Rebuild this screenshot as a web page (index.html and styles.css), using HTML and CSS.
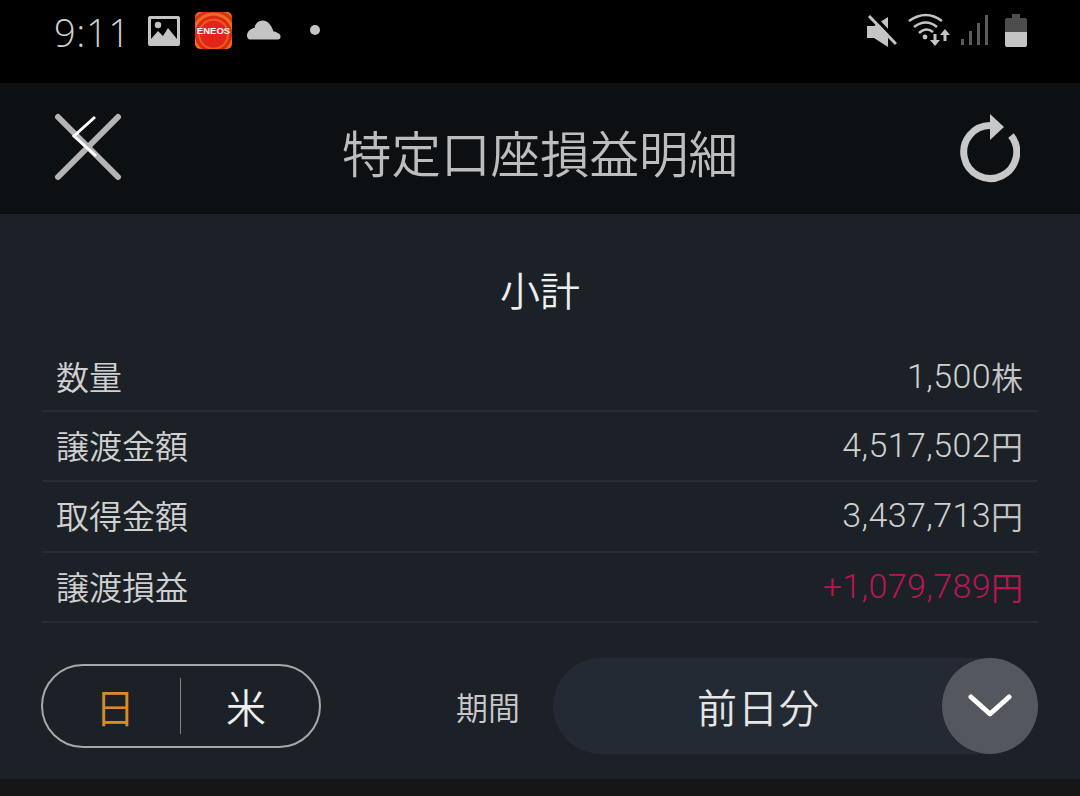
FILE: index.html
```html
<!DOCTYPE html>
<html lang="ja">
<head>
<meta charset="utf-8">
<title>特定口座損益明細</title>
<link rel="stylesheet" href="styles.css">
</head>
<body>
<div class="app">
  <div class="status">
    <span class="time">9:11</span>
    <svg class="ic-img" viewBox="0 0 32 30"><path fill-rule="evenodd" fill="#c4c4c4" d="M2 0h28a2 2 0 0 1 2 2v26a2 2 0 0 1-2 2H2a2 2 0 0 1-2-2V2a2 2 0 0 1 2-2zM3 3v20l7-8 5 5 5-8 9 11V3z"/><circle cx="10" cy="9" r="3.2" fill="#c4c4c4"/></svg>
    <div class="eneos"><span class="eneos-text">ENEOS</span></div>
    <svg class="ic-cloud" viewBox="0 0 34 20"><path fill="#c4c4c4" d="M3 19.500h28c3.500 0 3.500-5.500-.5-6.500-1-1-2.500-1.500-4-1.500C24 4 20 .5 16 .5c-4.500 0-8 3-8.500 7.500C3 8.500 0 12 0 15.500c0 2 1 4 3 4z"/></svg>
    <span class="dot"></span>
    <span class="status-gap"></span>
    <svg class="ic-mute" viewBox="0 0 30 32"><path fill="#c4c4c4" d="M0 11h7L21 2v30L7 23H0z"/><path stroke="#000" stroke-width="3.500" d="M5.500 0L34 30"/><path stroke="#c4c4c4" stroke-width="3" d="M2 1l27 28"/></svg>
    <svg class="ic-wifi" viewBox="0 0 44 33"><g fill="none" stroke="#c4c4c4" stroke-width="2.600"><path d="M2 8Q19-4 35 8"/><path d="M7 14Q19 5 30 14"/><path d="M12 20Q19 13.500 26 19"/></g><circle cx="18" cy="24" r="2.400" fill="#c4c4c4"/><path fill="#c4c4c4" d="M26.500 21h3v6h3.500L28 33l-5-6h3.500zM36.500 28h3v-6H43L38 16l-5 6h3.500z"/></svg>
    <svg class="ic-signal" viewBox="0 0 28 30"><g fill="#5c5c5c"><rect x="0" y="24" width="3" height="6"/><rect x="8" y="16" width="3" height="14"/><rect x="16" y="8" width="3" height="22"/><rect x="24" y="0" width="3" height="30"/></g></svg>
    <svg class="ic-batt" viewBox="0 0 22 33"><path fill="#4d4d4d" d="M7 0h8v4h5a2 2 0 0 1 2 2v12H0V6a2 2 0 0 1 2-2h5z"/><path fill="#c4c4c4" d="M0 18h22v13a2 2 0 0 1-2 2H2a2 2 0 0 1-2-2z"/></svg>
  </div>

  <header class="head">
    <svg class="ic-close" viewBox="0 0 68 68"><g stroke="#b4b4b4" stroke-width="6" stroke-linecap="round"><path d="M4 4l60 60"/><path d="M64 4L4 64"/></g><path fill="none" stroke="#fff" stroke-width="3" d="M41 4L20 23l22 20"/></svg>
    <h1 class="title">特定口座損益明細</h1>
    <svg class="ic-reload" viewBox="0 0 60 70"><path fill="none" stroke="#c8c8c8" stroke-width="7" d="M31 12.500A26.500 26.500 0 1 0 51 22.500"/><path fill="#c8c8c8" d="M30 1l14 13-14 13z"/></svg>
  </header>

  <main class="body">
    <h2 class="sub">小計</h2>
    <ul class="rows">
      <li class="row"><span class="label">数量</span><span class="value"><span class="num">1,500</span>株</span></li>
      <li class="row"><span class="label">譲渡金額</span><span class="value"><span class="num">4,517,502</span>円</span></li>
      <li class="row"><span class="label">取得金額</span><span class="value"><span class="num">3,437,713</span>円</span></li>
      <li class="row"><span class="label">譲渡損益</span><span class="value gain"><span class="num">+1,079,789</span>円</span></li>
    </ul>
    <div class="controls">
      <div class="toggle">
        <span class="seg on">日</span>
        <span class="seg">米</span>
      </div>
      <span class="period-label">期間</span>
      <div class="select">
        <span class="select-text">前日分</span>
        <span class="select-btn"><svg class="ic-chev" viewBox="0 0 44 24"><path fill="none" stroke="#fff" stroke-width="5" stroke-linecap="round" stroke-linejoin="round" d="M3 3l19 17L41 3"/></svg></span>
      </div>
    </div>
  </main>
  <div class="foot"></div>
</div>
</body>
</html>
```
FILE: styles.css
```css
* { box-sizing: border-box; margin: 0; padding: 0; }
html, body { width: 1080px; height: 796px; overflow: hidden; background: #000; }
body { font-family: "Noto Sans CJK JP", "Noto Sans", sans-serif; font-weight: 350; }
.app { width: 1080px; height: 796px; display: flex; flex-direction: column; }

.status { height: 83px; background: #000; display: flex; align-items: flex-start; padding-left: 54px; flex: none; }
.time { font-family: "Open Sans", sans-serif; font-weight: 300; font-size: 38px; line-height: 40px; margin-top: 12px; color: #d0d0d0; width: 94px; letter-spacing: 0.600px; }
.ic-img { width: 32px; height: 30px; margin-top: 16px; }
.eneos { width: 37px; height: 37px; margin: 12px 0 0 15px; border-radius: 5px; display: flex; align-items: center; justify-content: center;
  background: radial-gradient(circle at 50% 60%, #e3241a 0 10px, #d92a17 11px 13px, #f2581a 14px 15px, #d82a16 16px 18px, #ef6a1c 19px 21px, #d83216 22px 24px, #ee7a1c 26px); }
.eneos-text { font-family: "Liberation Sans", sans-serif; font-weight: 700; font-size: 9.500px; color: #fff; line-height: 10px; }
.ic-cloud { width: 34px; height: 20px; margin: 20px 0 0 15px; }
.dot { width: 10px; height: 10px; border-radius: 50%; background: #c4c4c4; margin: 25px 0 0 29px; }
.status-gap { flex: 1; }
.ic-mute { width: 30px; height: 32px; margin: 15px -1px 0 0; }
.ic-wifi { width: 44px; height: 33px; margin: 13px 0 0 11px; }
.ic-signal { width: 28px; height: 30px; margin: 15px 0 0 10px; }
.ic-batt { width: 22px; height: 33px; margin: 14px 53px 0 16px; }

.head { height: 131px; flex: none; background: #0c1013; display: flex; align-items: flex-start; padding-left: 54px; }
.ic-close { width: 68px; height: 68px; margin-top: 30px; flex: none; }
.title { font-size: 49.500px; font-weight: 350; color: #bdbdbd; line-height: 60px; margin: 39px 0 0 220px; width: 396px; white-space: nowrap; }
.ic-reload { width: 60px; height: 70px; margin: 30px 0 0 222px; flex: none; }

.body { flex: 1; background: #1c2128; padding: 0 42px; display: flex; flex-direction: column; }
.sub { font-size: 40px; font-weight: 350; color: #eee; text-align: center; line-height: 56px; margin-top: 47px; }
.rows { list-style: none; margin-top: 26px; }
.row { height: 70.300px; display: flex; justify-content: space-between; align-items: center; padding: 0 15px 2px 14px; font-size: 32px; color: #c4c4c4; border-bottom: 2px solid #262c35; }
.row:first-child { height: 69px; }
.label { font-size: 33px; color: #d0d0d0; }
.value { display: flex; align-items: center; }
.num { font-family: Roboto, sans-serif; font-weight: 300; font-size: 34px; line-height: 40px; letter-spacing: 0.400px; color: #d0d0d0; }
.gain { color: #b81650; }
.gain .num { color: #b81650; }

.controls { display: flex; align-items: center; margin-top: 35px; margin-left: -1px; }
.toggle { width: 280px; height: 84px; border: 2.500px solid #a6a8ab; border-radius: 42px; display: flex; align-items: center; flex: none; }
.seg { flex: 1; text-align: center; font-size: 40px; line-height: 56px; color: #eee; padding-right: 8px; }
.seg.on { flex: none; width: 138px; color: #d98a2b; border-right: 1px solid #7f8287; padding: 0 0 0 7px; }
.period-label { font-size: 32px; color: #c9c9c9; margin-left: 135px; width: 64px; flex: none; }
.select { width: 485px; height: 96px; margin-left: 33px; border-radius: 48px; background: #232a33; display: flex; align-items: center; flex: none; position: relative; }
.select-text { font-size: 40px; color: #e6e6e6; margin-left: 144px; letter-spacing: 1px; }
.select-btn { position: absolute; right: 0; top: 0; width: 96px; height: 96px; border-radius: 50%; background: #54585e; display: flex; align-items: center; justify-content: center; }
.ic-chev { width: 44px; height: 24px; }
.foot { height: 17px; flex: none; background: #161616; }
```
